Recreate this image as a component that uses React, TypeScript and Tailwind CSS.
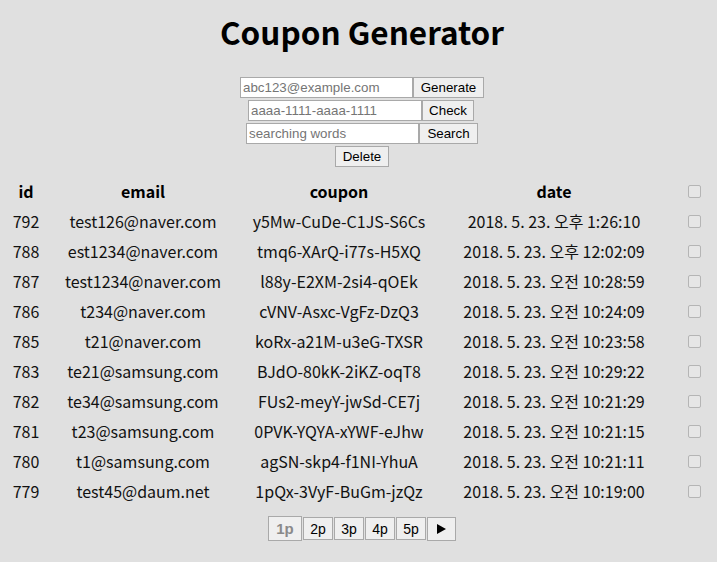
import React from "react";

const rows = [
  ["792", "test126@naver.com", "y5Mw-CuDe-C1JS-S6Cs", "2018. 5. 23. 오후 1:26:10"],
  ["788", "est1234@naver.com", "tmq6-XArQ-i77s-H5XQ", "2018. 5. 23. 오후 12:02:09"],
  ["787", "test1234@naver.com", "l88y-E2XM-2si4-qOEk", "2018. 5. 23. 오전 10:28:59"],
  ["786", "t234@naver.com", "cVNV-Asxc-VgFz-DzQ3", "2018. 5. 23. 오전 10:24:09"],
  ["785", "t21@naver.com", "koRx-a21M-u3eG-TXSR", "2018. 5. 23. 오전 10:23:58"],
  ["783", "te21@samsung.com", "BJdO-80kK-2iKZ-oqT8", "2018. 5. 23. 오전 10:29:22"],
  ["782", "te34@samsung.com", "FUs2-meyY-jwSd-CE7j", "2018. 5. 23. 오전 10:21:29"],
  ["781", "t23@samsung.com", "0PVK-YQYA-xYWF-eJhw", "2018. 5. 23. 오전 10:21:15"],
  ["780", "t1@samsung.com", "agSN-skp4-f1NI-YhuA", "2018. 5. 23. 오전 10:21:11"],
  ["779", "test45@daum.net", "1pQx-3VyF-BuGm-jzQz", "2018. 5. 23. 오전 10:19:00"],
];

const inputCls =
  "h-[21px] bg-white border border-[#a9a9a9] px-[2px] text-[13.33px] text-black placeholder:text-[#757575] outline-none";
const btnCls =
  "h-[21px] bg-[#efefef] border border-[#a9a9a9] text-[13.33px] text-black px-[6px] leading-none";

function Check() {
  return (
    <span className="inline-block w-[13px] h-[13px] rounded-[2px] border border-[#b5b5b5] bg-[#e6e6e6]" />
  );
}

function Row({ cells, header }: { cells: string[]; header?: boolean }) {
  return (
    <div
      className={`grid grid-cols-[52px_182px_210px_220px_1fr] h-[30px] items-center text-[16px] ${
        header ? "font-bold text-black" : "text-[#111]"
      }`}
    >
      {cells.map((c, i) => (
        <div key={i} className="text-center whitespace-nowrap">
          {c}
        </div>
      ))}
      <div className="flex justify-start pl-[24px]">
        <Check />
      </div>
    </div>
  );
}

export default function App() {
  return (
    <div
      className="w-[717px] h-[562px] bg-[#e0e0e0] overflow-hidden"
      style={{ fontFamily: '"Noto Sans CJK KR", "Noto Sans", sans-serif' }}
    >
      <h1 className="text-center text-[31.5px] font-bold leading-none pt-[16px] pl-[7px] h-[77px] text-black">
        Coupon Generator
      </h1>
      <div
        className="flex flex-col items-center gap-[2px]"
        style={{ fontFamily: '"Liberation Sans", Arial, sans-serif' }}
      >
        <div className="flex h-[21px] ml-[7px]">
          <input className={`${inputCls} w-[173px]`} placeholder="abc123@example.com" />
          <button className={`${btnCls} w-[71px]`}>Generate</button>
        </div>
        <div className="flex h-[21px] ml-[5px]">
          <input className={`${inputCls} w-[174px]`} placeholder="aaaa-1111-aaaa-1111" />
          <button className={`${btnCls} w-[52px]`}>Check</button>
        </div>
        <div className="flex h-[21px] ml-[7px]">
          <input className={`${inputCls} w-[173px]`} placeholder="searching words" />
          <button className={`${btnCls} w-[59px]`}>Search</button>
        </div>
        <div className="flex h-[21px] ml-[7px]">
          <button className={`${btnCls} w-[54px]`}>Delete</button>
        </div>
      </div>
      <div className="mt-[9px]">
        <Row cells={["id", "email", "coupon", "date"]} header />
        {rows.map((r) => (
          <Row key={r[0]} cells={r} />
        ))}
      </div>
      <div
        className="flex justify-center items-center mt-[10px] ml-[7px]"
        style={{ fontFamily: '"Liberation Sans", Arial, sans-serif' }}
      >
        <button className="h-[25px] w-[34px] bg-[#efefef] border border-[#a9a9a9] text-[15px] font-bold text-[#8a8a8a] leading-none">
          1p
        </button>
        {["2p", "3p", "4p", "5p"].map((p) => (
          <button
            key={p}
            className="h-[23px] w-[30px] ml-[1px] bg-[#efefef] border border-[#a9a9a9] text-[14px] text-black leading-none"
          >
            {p}
          </button>
        ))}
        <button className="h-[24px] w-[29px] ml-[1px] bg-[#efefef] border border-[#a9a9a9] flex items-center justify-center">
          <svg width="9" height="10" viewBox="0 0 9 10">
            <path d="M0 0 L9 5 L0 10 Z" fill="#000" />
          </svg>
        </button>
      </div>
    </div>
  );
}
